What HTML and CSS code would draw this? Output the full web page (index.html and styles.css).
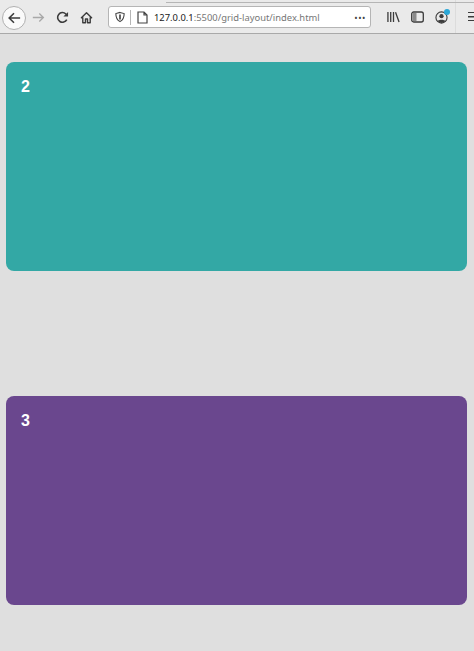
FILE: index.html
```html
<!DOCTYPE html>
<html lang="en">
<head>
    <meta charset="UTF-8">
    <meta name="viewport" content="width=device-width, initial-scale=1.0">
    <title>Grid Layout</title>
    <link rel="stylesheet" href="styles.css">
</head>
<body>
    <div class="toolbar">
        <div class="tab-edge"></div>
        <div class="nav-group">
            <button class="back-btn">
                <svg width="14" height="14" viewBox="0 0 16 16"><path d="M15 8H2.5M8 2.5L2.5 8L8 13.5" fill="none" stroke="#3c3c3c" stroke-width="1.8"/></svg>
            </button>
            <span class="tool-icon forward">
                <svg width="13" height="13" viewBox="0 0 16 16"><path d="M1 8H14M9 3L14 8L9 13" fill="none" stroke="#a8a8a8" stroke-width="1.6"/></svg>
            </span>
            <span class="tool-icon reload">
                <svg width="13" height="13" viewBox="0 0 14 14"><path d="M11.6 9.2A5.2 5.2 0 1 1 10.6 3.2L12.2 4.6" fill="none" stroke="#3c3c3c" stroke-width="1.7"/><path d="M13 1V6H8Z" fill="#3c3c3c"/></svg>
            </span>
            <span class="tool-icon home">
                <svg width="13" height="13" viewBox="0 0 14 14"><path d="M7 1.8L1.5 7.3H3V12.6H5.9V8.6H8.1V12.6H11V7.3H12.5Z" fill="none" stroke="#3c3c3c" stroke-width="1.5" stroke-linejoin="round"/></svg>
            </span>
        </div>
        <div class="url-bar">
            <svg class="shield" width="10" height="12" viewBox="0 0 12 13"><path d="M6 1L11 2.4C11 7 9.6 10.4 6 12C2.4 10.4 1 7 1 2.4Z" fill="none" stroke="#444" stroke-width="1.3"/><path d="M6 3.5V9.5" stroke="#444" stroke-width="2"/></svg>
            <span class="url-sep"></span>
            <svg class="page-icon" width="11" height="13" viewBox="0 0 11 13"><path d="M1 1H7L10 4V12H1ZM7 1V4H10" fill="none" stroke="#444" stroke-width="1.2"/></svg>
            <span class="url-text"><span class="url-host">127.0.0.1</span>:5500/grid-layout/index.html</span>
            <span class="url-more">•••</span>
        </div>
        <div class="side-group">
            <svg width="13" height="12" viewBox="0 0 14 12"><path d="M1 0.5V11.5M4 0.5V11.5M7 0.5V11.5M9.2 0.8L13 11.3" fill="none" stroke="#3c3c3c" stroke-width="1.4"/></svg>
            <svg width="13" height="12" viewBox="0 0 13 12"><rect x="0.7" y="1" width="11.6" height="10" rx="2" fill="none" stroke="#3c3c3c" stroke-width="1.3"/><rect x="1.5" y="2" width="4" height="8" fill="#8a8a8a"/></svg>
            <span class="account">
                <svg width="13" height="13" viewBox="0 0 14 14"><circle cx="7" cy="7" r="6" fill="none" stroke="#3c3c3c" stroke-width="1.2"/><circle cx="7" cy="5.6" r="2.3" fill="#3c3c3c"/><path d="M2.8 11C3.6 8.8 10.4 8.8 11.2 11L7 13Z" fill="#3c3c3c"/></svg>
                <span class="account-dot"></span>
            </span>
        </div>
        <div class="menu-group">
            <span class="menu-bars"></span>
        </div>
    </div>

    <div class="grid">
        <div class="card teal">2</div>
        <div class="card purple">3</div>
    </div>
</body>
</html>
```

FILE: styles.css
```css
body {
    margin: 0;
    background-color: #dfdfdf;
    font-family: "Noto Sans", "Open Sans", sans-serif;
}
.toolbar {
    height: 33px;
    display: flex;
    align-items: center;
    position: relative;
    background-color: #eaeaea;
    border-bottom: 1px solid #a9a9a9;
    overflow: hidden;
}
.tab-edge {
    position: absolute;
    top: 0;
    left: 166px;
    right: 0;
    height: 2px;
    border-bottom: 1px solid #b5b5b5;
}
.nav-group {
    display: flex;
    flex: none;
    align-items: center;
    margin-left: 2px;
    padding-top: 2px;
}
.back-btn {
    width: 24px;
    height: 24px;
    padding: 0;
    border: 1px solid #b0b0b0;
    border-radius: 50%;
    background-color: #fafafa;
    display: flex;
    align-items: center;
    justify-content: center;
}
.tool-icon {
    display: flex;
    align-items: center;
    justify-content: center;
}
.forward {
    margin-left: 6px;
}
.reload {
    margin-left: 11px;
}
.home {
    margin-left: 11px;
}
.url-bar {
    flex: none;
    width: 261px;
    height: 20px;
    margin-left: 15px;
    margin-top: 1px;
    display: flex;
    align-items: center;
    background-color: #fff;
    border: 1px solid #b5b5b5;
    border-radius: 3px;
}
.shield {
    margin-left: 6px;
}
.url-sep {
    width: 1px;
    height: 15px;
    margin-left: 5px;
    background-color: #b5b5b5;
}
.page-icon {
    margin-left: 6px;
}
.url-text {
    margin-left: 6px;
    font-size: 9.4px;
    color: #777;
    white-space: nowrap;
}
.url-host {
    color: #222;
}
.url-more {
    margin-left: auto;
    margin-right: 4px;
    font-size: 9px;
    letter-spacing: 0.5px;
    color: #444;
}
.side-group {
    display: flex;
    flex: none;
    align-items: center;
    gap: 11px;
    margin-left: 16px;
    padding-top: 1px;
}
.account {
    display: flex;
    position: relative;
}
.account-dot {
    position: absolute;
    top: -2px;
    right: -2px;
    width: 6px;
    height: 6px;
    border-radius: 50%;
    background-color: #2aa8d8;
}
.menu-group {
    height: 100%;
    margin-left: 7px;
    padding-left: 12px;
    display: flex;
    align-items: center;
    flex: 1;
    border-left: 1px solid #dcdcdc;
}
.menu-bars {
    flex: none;
    width: 12px;
    height: 9px;
    border-top: 1.5px solid #3c3c3c;
    border-bottom: 1.5px solid #3c3c3c;
    box-sizing: border-box;
    background: linear-gradient(#3c3c3c, #3c3c3c) center / 100% 1.5px no-repeat;
}
.grid {
    display: grid;
    grid-template-rows: 208.5px 208.5px;
    row-gap: 125.5px;
    padding: 28px 7px 46px 6px;
}
.card {
    border-radius: 8px;
    padding: 16px 15px;
    font-family: "Liberation Sans", Arial, sans-serif;
    font-size: 16px;
    font-weight: 700;
    color: #fff;
}
.teal {
    background-color: #33a8a5;
}
.purple {
    background-color: #6a478e;
}
```
